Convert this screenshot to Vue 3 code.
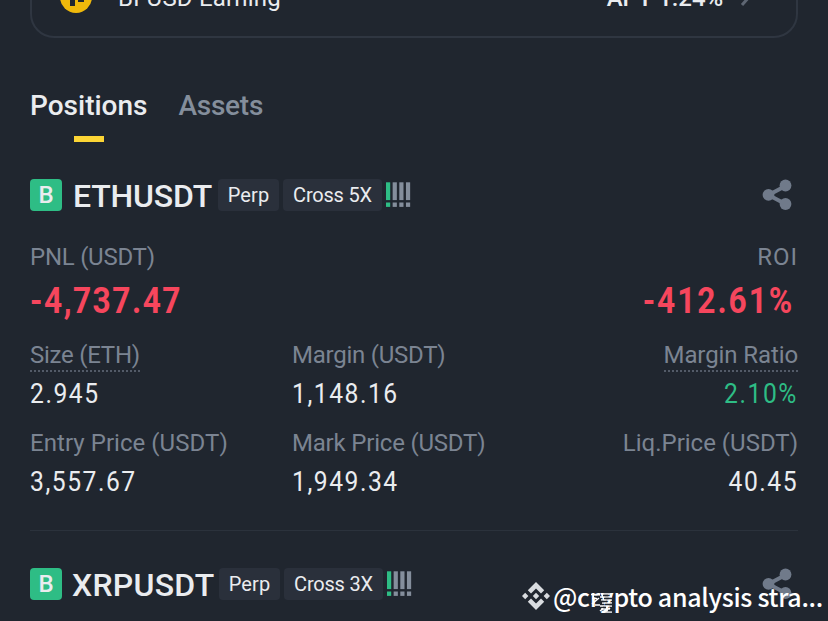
<script setup>
import { ref } from "vue";

const activeTab = ref("Positions");
const tabs = ["Positions", "Assets"];

const positions = [
  {
    symbol: "ETHUSDT",
    leverage: "Cross 5X",
    pnl: "-4,737.47",
    roi: "-412.61%",
    stats: [
      { key: "size", label: "Size (ETH)", value: "2.945", hint: true },
      { key: "margin", label: "Margin (USDT)", value: "1,148.16" },
      { key: "ratio", label: "Margin Ratio", value: "2.10%", hint: true, up: true },
      { key: "entry", label: "Entry Price (USDT)", value: "3,557.67" },
      { key: "mark", label: "Mark Price (USDT)", value: "1,949.34" },
      { key: "liq", label: "Liq.Price (USDT)", value: "40.45" }
    ]
  },
  { symbol: "XRPUSDT", leverage: "Cross 3X" }
];
</script>

<template>
  <div class="screen">
    <div class="earning">
      <svg class="coin" width="32" height="32" viewBox="0 0 32 32">
        <circle cx="16" cy="16" r="16" fill="#f0b90b" />
        <path d="M10 9h5v16h-5zM15 12h3v9h6v-9h-3v6h-6z" fill="#20262f" />
      </svg>
      <span class="earning-name">BFUSD Earning</span>
      <span class="earning-apy">APY 1.24%</span>
      <svg class="chevron" width="12" height="20" viewBox="0 0 12 20">
        <path d="M2 1l8 9-8 9" fill="none" stroke="#5e6673" stroke-width="3" />
      </svg>
    </div>

    <div class="tabs">
      <div
        v-for="tab in tabs"
        :key="tab"
        class="tab"
        :class="[tab.toLowerCase(), { active: tab === activeTab }]"
        @click="activeTab = tab"
      >
        {{ tab }}
      </div>
    </div>

    <div v-for="p in positions" :key="p.symbol" class="position">
      <div class="head" :class="p.symbol.toLowerCase()">
        <span class="side">B</span>
        <span class="symbol">{{ p.symbol }}</span>
        <span class="chip perp">Perp</span>
        <span class="chip cross">{{ p.leverage }}</span>
        <svg class="risk" width="25" height="26" viewBox="0 0 25 26">
          <g v-for="n in 4" :key="n" :fill="n === 1 ? '#2ebd85' : '#848e9c'">
            <rect :x="(n - 1) * 6.65" y="0.3" width="4.2" height="17.8" />
            <rect :x="(n - 1) * 6.65" y="20.500" width="4.2" height="4.4" />
          </g>
        </svg>
        <svg class="share" width="30" height="32" viewBox="0 0 30 32">
          <path d="M23.5 7L6.5 16l17 9" fill="none" stroke="#707a8a" stroke-width="4" />
          <g fill="#707a8a">
            <circle cx="23.5" cy="6.5" r="5.9" />
            <circle cx="6.5" cy="15.8" r="5.9" />
            <circle cx="23.5" cy="25" r="5.9" />
          </g>
        </svg>
      </div>

      <template v-if="p.stats">
        <div class="result">
          <div>
            <div class="label">PNL (USDT)</div>
            <div class="big pnl">{{ p.pnl }}</div>
          </div>
          <div class="right">
            <div class="label roi-label">ROI</div>
            <div class="big roi">{{ p.roi }}</div>
          </div>
        </div>
        <div class="stats">
          <div v-for="s in p.stats" :key="s.key" class="stat" :class="s.key">
            <span class="label" :class="{ hint: s.hint }">{{ s.label }}</span>
            <span class="value" :class="{ up: s.up }">{{ s.value }}</span>
          </div>
        </div>
      </template>
    </div>

    <div class="watermark">
      <svg width="28" height="28" viewBox="0 0 28 28" fill="#d9dce0">
        <path d="M14 0l8.2 8.2-3.2 3.2-5-5-5 5-3.2-3.2z" />
        <path d="M14 28l8.2-8.2-3.2-3.2-5 5-5-5-3.2 3.2z" />
        <path d="M14 10.8l3.2 3.2-3.2 3.2-3.2-3.2zM3.2 10.8L6.4 14l-3.2 3.2L0 14zM24.8 10.8L28 14l-3.2 3.2-3.2-3.2z" />
      </svg>
      <span>@crypto analysis stra...</span>
      <svg class="speckle" width="22" height="20" viewBox="0 0 22 20">
        <path d="M0 1.500h9M1 5.500h5M10 1h11M9 4h12M10 7h11M11 10h10M9 13h12M10 16h9M12 19h9" stroke="#fff" stroke-width="1.3" />
        <path d="M1 11l7-6M4 12h5M9 18l5-4M15 18l4-3" stroke="#fff" stroke-width="1.6" />
        <path d="M3 3.500h5M12 2.500h5M13 5.500h8M10 8.500h6M14 11.500h7M12 14.500h3M17 17.500h4" stroke="#20262f" stroke-width="1.5" />
      </svg>
    </div>
  </div>
</template>

<style>
body {
  background: #20262f;
  overflow: hidden;
}
</style>

<style scoped>
.screen {
  position: relative;
  box-sizing: border-box;
  width: 828px;
  height: 621px;
  padding: 0 30px;
  overflow: hidden;
  background: #20262f;
  color: #eaecef;
  font-family: Roboto, "Liberation Sans", sans-serif;
}
.earning {
  display: flex;
  align-items: center;
  box-sizing: border-box;
  height: 80px;
  margin-top: -42px;
  padding: 0 44px 0 28px;
  border: 2px solid #2f3641;
  border-radius: 24px;
  font-size: 24px;
}
.coin {
  margin-top: -2px;
}
.earning-name {
  margin-left: 26px;
  letter-spacing: 0.2px;
}
.earning-apy {
  margin-left: auto;
  font-weight: 500;
  letter-spacing: -0.1px;
}
.chevron {
  margin-top: -5px;
  margin-left: 17px;
}
.tabs {
  display: flex;
  gap: 31px;
  height: 55px;
  margin-top: 49px;
  font-size: 28px;
  font-weight: 500;
  line-height: 37px;
}
.tab {
  display: flex;
  flex-direction: column;
  align-items: center;
  color: #848e9c;
}
.assets {
  letter-spacing: -0.25px;
}
.tab.active {
  color: #eaecef;
}
.tab.active::after {
  content: "";
  width: 30px;
  height: 6px;
  margin-top: 12px;
  background: #fcd535;
}
.head {
  display: flex;
  align-items: center;
  height: 32px;
}
.position:nth-child(3) {
  height: 351px;
  margin-top: 37px;
  border-bottom: 1px solid #2b323c;
}
.position + .position {
  margin-top: 37px;
}
.side {
  width: 32px;
  height: 32px;
  border-radius: 4px;
  background: #2ebd85;
  font-size: 24px;
  font-weight: 500;
  line-height: 33px;
  text-align: center;
}
.symbol {
  width: 145px;
  margin-left: 11px;
  padding-top: 2px;
  font-size: 32px;
  font-weight: 500;
  letter-spacing: -0.2px;
  line-height: 34px;
  white-space: nowrap;
}
.xrpusdt .symbol {
  width: 147px;
  margin-left: 10px;
  letter-spacing: 0.25px;
}
.chip {
  height: 32px;
  border-radius: 4px;
  background: #2a303b;
  font-size: 20px;
  letter-spacing: -0.2px;
  line-height: 33px;
  text-align: center;
}
.perp {
  width: 61px;
  letter-spacing: 0.1px;
}
.cross {
  width: 99px;
  margin-left: 4px;
}
.risk {
  margin-left: 4px;
}
.share {
  margin-right: 6px;
  margin-left: auto;
}
.result {
  display: flex;
  justify-content: space-between;
  margin-top: 31px;
}
.right {
  text-align: right;
}
.label {
  color: #7b8492;
  font-size: 24px;
  letter-spacing: -0.25px;
  line-height: 30px;
  white-space: nowrap;
}
.entry .label {
  letter-spacing: 0.05px;
}
.mark .label {
  letter-spacing: -0.2px;
}
.ratio .label {
  letter-spacing: -0.1px;
}
.liq .label {
  letter-spacing: 0;
}
.roi-label {
  letter-spacing: 1px;
}
/* numbers are set narrow and tracked out */
.big,
.value {
  transform: scaleX(0.88);
  transform-origin: left;
}
.big {
  margin-top: 9px;
  color: #f6465d;
  font-size: 36px;
  font-weight: 700;
  letter-spacing: 1.7px;
  line-height: 40px;
}
.roi {
  margin-right: 4px;
  letter-spacing: 2.2px;
  transform-origin: right;
}
.stats {
  display: grid;
  grid-template-columns: 262px 1fr auto;
  grid-auto-rows: 88px;
  margin-top: 19px;
}
.stat {
  display: flex;
  flex-direction: column;
  align-items: flex-start;
}
.stat:nth-child(3n) {
  align-items: flex-end;
}
.stat:nth-child(3n) .value {
  transform-origin: right;
}
.stat .label {
  height: 30px;
}
.label.hint {
  border-bottom: 2px dotted #535b68;
}
.value {
  margin-top: 7px;
  font-size: 28px;
  letter-spacing: 1.75px;
  line-height: 34px;
}
.hint + .value {
  margin-top: 5px;
}
.up {
  color: #2ebd85;
}
.watermark {
  position: absolute;
  top: 580px;
  left: 522px;
  display: flex;
  align-items: center;
  gap: 3px;
  color: #fff;
  font-family: "Noto Sans CJK SC", sans-serif;
  font-size: 25px;
  font-weight: 500;
  letter-spacing: -0.3px;
  line-height: 32px;
  white-space: nowrap;
}
.speckle {
  position: absolute;
  top: 13px;
  left: 69px;
}
</style>
